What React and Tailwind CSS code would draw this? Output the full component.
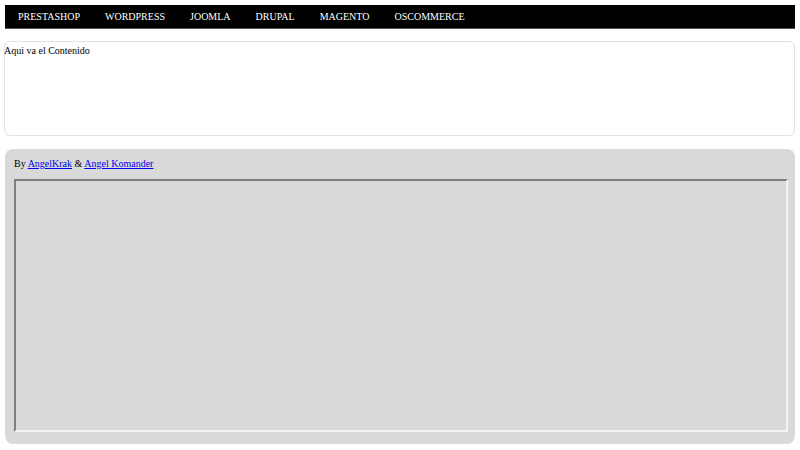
const links = ['PRESTASHOP', 'WORDPRESS', 'JOOMLA', 'DRUPAL', 'MAGENTO', 'OSCOMMERCE']

export default function App() {
  return (
    <div className="w-[800px] h-[450px] bg-white font-['Liberation_Serif',serif] text-[10px] text-black overflow-hidden">
      <nav className="mx-[5px] mt-[5px] h-[24px] bg-black border-b border-[#555] flex items-center pl-[0.5px]">
        {links.map((l) => (
          <a key={l} href="#" className="px-[12.5px] text-[10px] text-white">{l}</a>
        ))}
      </nav>

      <div className="ml-[4px] mr-[5px] mt-[12px] h-[95px] border border-[#e2e2e2] rounded-[6px]">
        <p className="-ml-px leading-[16px] pt-[1px]">Aqui va el Contenido</p>
      </div>

      <div className="mx-[5px] mt-[13px] h-[295px] bg-[#d9d9d9] rounded-[8px] pl-[9px] pr-[7px] pt-[8px]">
        <p className="leading-[14px]">
          By <a href="#" className="text-[#0000ee] underline">AngelKrak</a> &amp;{' '}
          <a href="#" className="text-[#0000ee] underline">Angel Komander</a>
        </p>
        <div className="mt-[8px] h-[253px] border-2 border-t-[#808080] border-l-[#808080] border-b-[#f4f4f4] border-r-[#f4f4f4]" />
      </div>
    </div>
  )
}
